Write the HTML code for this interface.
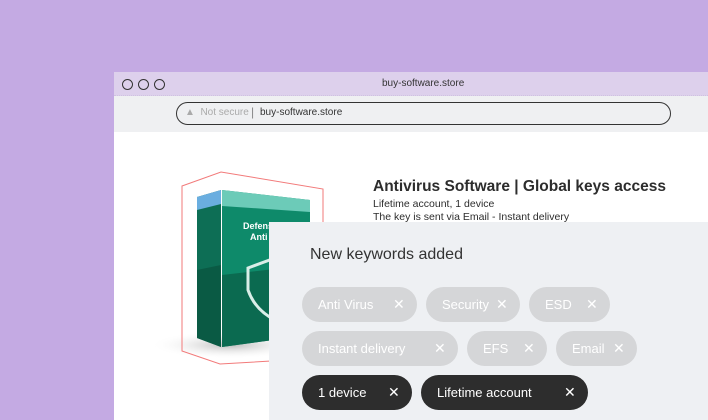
<!DOCTYPE html>
<html><head><style>
*{margin:0;padding:0;box-sizing:border-box}
html,body{width:708px;height:420px;overflow:hidden}
body{background:#c4aae3;position:relative;font-family:"Liberation Sans",sans-serif}
.win{position:absolute;left:114px;top:72px;width:594px;height:348px;background:#fff}
.title{position:absolute;left:0;top:0;width:100%;height:24px;background:#ddd0ec;border-bottom:1px dotted #cfc2e0}
.dot{position:absolute;top:7px;width:11px;height:11px;border:1.5px solid #333;border-radius:50%}
.tt{position:absolute;left:268px;top:6px;font-size:10px;color:#333}
.addr{position:absolute;left:0;top:24px;width:100%;height:36px;background:#eff0f2}
.bar{position:absolute;left:62px;top:6px;width:495px;height:23px;border:1.5px solid #333;border-radius:12px}
.bar span{position:absolute;top:4px;font-size:10px}
.panel{position:absolute;left:269px;top:222px;width:439px;height:198px;background:#eef0f3}
.h{position:absolute;left:310px;top:246px;font-size:16px;color:#333}
.chip{position:absolute;height:35px;border-radius:18px;background:#d5d6d8;color:#fff;font-size:13px;line-height:35px;padding-left:16px}
.chip b{position:absolute;top:0;font-weight:normal;font-size:14px}
.dk{background:#2d2d2d}
</style></head><body>
<div class="win">
<div class="title"><div class="dot" style="left:8px"></div><div class="dot" style="left:24px"></div><div class="dot" style="left:40px"></div><div class="tt">buy-software.store</div></div>
<div class="addr"><div class="bar"><span style="left:8px;color:#aaa">▲ &nbsp;Not secure</span><span style="left:74px;color:#888;top:2px;font-size:12px">|</span><span style="left:83px;color:#333">buy-software.store</span></div></div>
</div>
<svg style="position:absolute;left:0;top:0" width="708" height="420">
<defs><radialGradient id="sh" cx="0.5" cy="0.5" r="0.5"><stop offset="0" stop-color="#bbb"/><stop offset="1" stop-color="#fff" stop-opacity="0"/></radialGradient></defs>
<ellipse cx="230" cy="345" rx="80" ry="14" fill="url(#sh)"/>
<polygon points="182,186 221,172 323,189 323,358 220,364 182,351" fill="none" stroke="#f27a7a" stroke-width="1"/>
<polygon points="197,197 221,190 221,347 197,338" fill="#0d6e55"/>
<polygon points="197,197 221,190 221,204 197,210" fill="#6aaee0"/>
<polygon points="197,270 221,265 221,347 197,338" fill="#0a5a44"/>
<polygon points="222,190 310,200 310,335 222,347" fill="#0e8a6a"/>
<polygon points="222,190 310,200 310,212 222,206" fill="#6ccbb8"/>
<polygon points="222,275 310,265 310,335 222,347" fill="#0b6a50"/>
<text x="243" y="229" font-size="9" font-weight="bold" fill="#fff" font-family="Liberation Sans">Defense</text>
<text x="250" y="240" font-size="9" font-weight="bold" fill="#fff" font-family="Liberation Sans">Anti</text>
<path d="M248,268 L275,258 L275,320 Q255,310 248,290 Z" fill="none" stroke="#d9eee8" stroke-width="3"/>
</svg>
<div style="position:absolute;left:373px;top:178px;font-size:15.5px;font-weight:bold;color:#2d2d2d">Antivirus Software | Global keys access</div>
<div style="position:absolute;left:373px;top:198px;font-size:10.5px;color:#2d2d2d">Lifetime account, 1 device</div>
<div style="position:absolute;left:373px;top:211px;font-size:10.5px;color:#2d2d2d">The key is sent via Email - Instant delivery</div>
<div class="panel"></div>
<div class="h">New keywords added</div>
<div class="chip" style="left:302px;top:287px;width:115px">Anti Virus<b style="left:91px">✕</b></div>
<div class="chip" style="left:426px;top:287px;width:94px">Security<b style="left:70px">✕</b></div>
<div class="chip" style="left:529px;top:287px;width:81px">ESD<b style="left:57px">✕</b></div>
<div class="chip" style="left:302px;top:331px;width:156px">Instant delivery<b style="left:132px">✕</b></div>
<div class="chip" style="left:467px;top:331px;width:80px">EFS<b style="left:56px">✕</b></div>
<div class="chip" style="left:556px;top:331px;width:81px">Email<b style="left:57px">✕</b></div>
<div class="chip dk" style="left:302px;top:375px;width:110px">1 device<b style="left:86px">✕</b></div>
<div class="chip dk" style="left:421px;top:375px;width:167px">Lifetime account<b style="left:143px">✕</b></div>
</body></html>
